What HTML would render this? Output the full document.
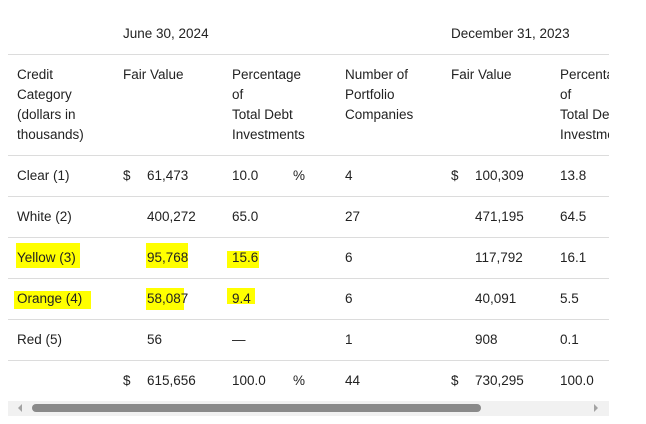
<!DOCTYPE html>
<html><head><style>
body{margin:0;width:646px;height:424px;background:#fff;position:relative;overflow:hidden;font-family:"Liberation Sans",sans-serif;font-size:13.5px;color:#222}
.t{position:absolute;white-space:nowrap;line-height:20px;margin-top:1px}
.l{position:absolute;left:8px;width:601px;height:1px;background:#dcdcdc}
.h{position:absolute;background:#ffff00}
#clip{position:absolute;left:0;top:0;width:609px;height:424px;overflow:hidden}
</style></head><body>
<div class="h" style="left:16px;top:243px;width:64px;height:25px"></div>
<div class="h" style="left:146px;top:243px;width:42px;height:25px"></div>
<div class="h" style="left:227px;top:251px;width:32px;height:17px"></div>
<div class="h" style="left:14px;top:291px;width:77px;height:18px"></div>
<div class="h" style="left:146px;top:288px;width:38px;height:22px"></div>
<div class="h" style="left:227px;top:288px;width:28px;height:16px"></div>
<div id="clip">
<div class="t" style="left:123px;top:23px">June 30, 2024</div>
<div class="t" style="left:451px;top:23px">December 31, 2023</div>
<div class="l" style="top:54px"></div>
<div class="t" style="left:17px;top:64px">Credit<br>Category<br>(dollars in<br>thousands)</div>
<div class="t" style="left:123px;top:64px">Fair Value</div>
<div class="t" style="left:232px;top:64px">Percentage<br>of<br>Total Debt<br>Investments</div>
<div class="t" style="left:345px;top:64px">Number of<br>Portfolio<br>Companies</div>
<div class="t" style="left:451px;top:64px">Fair Value</div>
<div class="t" style="left:560px;top:64px">Percentage<br>of<br>Total Debt<br>Investments</div>
<div class="l" style="top:155px"></div>
<div class="l" style="top:196px"></div>
<div class="l" style="top:237px"></div>
<div class="l" style="top:278px"></div>
<div class="l" style="top:319px"></div>
<div class="l" style="top:360px"></div>

<div class="t" style="left:17px;top:165px">Clear (1)</div><div class="t" style="left:123px;top:165px">$</div><div class="t" style="left:147px;top:165px">61,473</div><div class="t" style="left:232px;top:165px">10.0</div><div class="t" style="left:293px;top:165px">%</div><div class="t" style="left:345px;top:165px">4</div><div class="t" style="left:451px;top:165px">$</div><div class="t" style="left:475px;top:165px">100,309</div><div class="t" style="left:560px;top:165px">13.8</div>

<div class="t" style="left:17px;top:206px">White (2)</div><div class="t" style="left:147px;top:206px">400,272</div><div class="t" style="left:232px;top:206px">65.0</div><div class="t" style="left:345px;top:206px">27</div><div class="t" style="left:475px;top:206px">471,195</div><div class="t" style="left:560px;top:206px">64.5</div>

<div class="t" style="left:17px;top:247px">Yellow (3)</div><div class="t" style="left:147px;top:247px">95,768</div><div class="t" style="left:232px;top:247px">15.6</div><div class="t" style="left:345px;top:247px">6</div><div class="t" style="left:475px;top:247px">117,792</div><div class="t" style="left:560px;top:247px">16.1</div>

<div class="t" style="left:17px;top:288px">Orange (4)</div><div class="t" style="left:147px;top:288px">58,087</div><div class="t" style="left:232px;top:288px">9.4</div><div class="t" style="left:345px;top:288px">6</div><div class="t" style="left:475px;top:288px">40,091</div><div class="t" style="left:560px;top:288px">5.5</div>

<div class="t" style="left:17px;top:329px">Red (5)</div><div class="t" style="left:147px;top:329px">56</div><div class="t" style="left:232px;top:329px">—</div><div class="t" style="left:345px;top:329px">1</div><div class="t" style="left:475px;top:329px">908</div><div class="t" style="left:560px;top:329px">0.1</div>

<div class="t" style="left:123px;top:370px">$</div><div class="t" style="left:147px;top:370px">615,656</div><div class="t" style="left:232px;top:370px">100.0</div><div class="t" style="left:293px;top:370px">%</div><div class="t" style="left:345px;top:370px">44</div><div class="t" style="left:451px;top:370px">$</div><div class="t" style="left:475px;top:370px">730,295</div><div class="t" style="left:560px;top:370px">100.0</div>

<div style="position:absolute;left:8px;top:401px;width:601px;height:15px;background:#f1f1f1"></div>
<div style="position:absolute;left:18px;top:404px;width:0;height:0;border-top:4px solid transparent;border-bottom:4px solid transparent;border-right:4px solid #a3a3a3"></div>
<div style="position:absolute;left:594px;top:404px;width:0;height:0;border-top:4px solid transparent;border-bottom:4px solid transparent;border-left:4px solid #a3a3a3"></div>
<div style="position:absolute;left:32px;top:404px;width:449px;height:8px;border-radius:4px;background:#8a8a8a"></div>
</div>
</body></html>
